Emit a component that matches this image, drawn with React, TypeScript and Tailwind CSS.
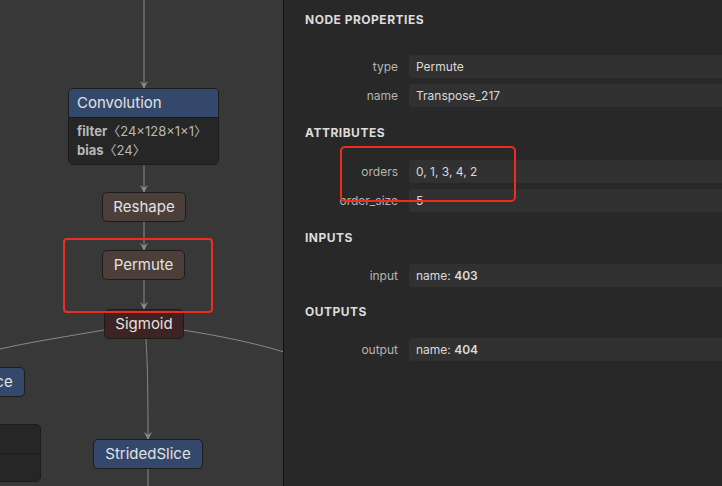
import React from "react"

type Row = { label: string; value: React.ReactNode }

const sections: { title: string; rows: Row[] }[] = [
  {
    title: "Node Properties",
    rows: [
      { label: "type", value: "Permute" },
      { label: "name", value: "Transpose_217" },
    ],
  },
  {
    title: "Attributes",
    rows: [
      { label: "orders", value: "0, 1, 3, 4, 2" },
      { label: "order_size", value: "5" },
    ],
  },
  {
    title: "Inputs",
    rows: [
      {
        label: "input",
        value: (
          <span>
            name: <b className="font-semibold">403</b>
          </span>
        ),
      },
    ],
  },
  {
    title: "Outputs",
    rows: [
      {
        label: "output",
        value: (
          <span>
            name: <b className="font-semibold">404</b>
          </span>
        ),
      },
    ],
  },
]

function Edges() {
  return (
    <svg className="absolute inset-0" width={283} height={486}>
      <defs>
        <marker
          id="arrow"
          viewBox="0 0 10 10"
          refX="9"
          refY="5"
          markerUnits="userSpaceOnUse"
          markerWidth="8"
          markerHeight="8"
          orient="auto"
        >
          <path d="M0 0 L10 5 L0 10 L4 5 z" fill="#8c8c8c" />
        </marker>
      </defs>
      <g stroke="#888" strokeWidth="1" fill="none">
        <path d="M144 0 L144 88" markerEnd="url(#arrow)" />
        <path d="M144 163 L144 192" markerEnd="url(#arrow)" />
        <path d="M144 221 L144 250" markerEnd="url(#arrow)" />
        <path d="M144 280 L144 309" markerEnd="url(#arrow)" />
        <path d="M146 339 C147 360 148 370 148 439" markerEnd="url(#arrow)" />
        <path d="M104 330 C70 336 30 342 0 349" />
        <path d="M183 330 C220 336 255 343 284 352" />
        <path d="M148 468 L148 486" />
      </g>
    </svg>
  )
}

const bracket = "font-['Noto_Sans_CJK_SC',sans-serif] text-[13px] leading-none"

function Graph() {
  return (
    <div className="relative w-[284px] h-full shrink-0 bg-[#383838] border-r border-[#121212] overflow-hidden">
      <Edges />

      {/* Convolution */}
      <div className="absolute left-[68px] top-[88px] w-[151px] rounded-[5px] border border-[#1c1c1c] overflow-hidden">
        <div className="h-[29px] bg-[#33486b] border-b border-[#1c1c1c] px-[8px] flex items-center text-[15px] text-[#e2e2e2]">
          Convolution
        </div>
        <div className="bg-[#262626] px-[8px] pt-[4px] pb-[4px] text-[13px] leading-[19px] text-[#b8b8b8]">
          <div className="h-[19px]">
            <span className="font-bold">filter</span>
            <span className={bracket}>〈</span>24×128×1×1<span className={bracket}>〉</span>
          </div>
          <div className="h-[19px]">
            <span className="font-bold">bias</span>
            <span className={bracket}>〈</span>24<span className={bracket}>〉</span>
          </div>
        </div>
      </div>

      {/* Reshape */}
      <div className="absolute left-[102px] top-[192px] w-[84px] h-[30px] rounded-[5px] border border-[#1c1c1c] bg-[#4c3e39] flex items-center justify-center text-[15px] text-[#e2e2e2]">
        Reshape
      </div>

      {/* Permute */}
      <div className="absolute left-[102px] top-[250px] w-[83px] h-[30px] rounded-[5px] border border-[#1c1c1c] bg-[#4c3e39] flex items-center justify-center text-[15px] text-[#e2e2e2]">
        Permute
      </div>

      {/* Sigmoid */}
      <div className="absolute left-[104px] top-[309px] w-[80px] h-[30px] rounded-[5px] border border-[#1c1c1c] bg-[#3d2321] flex items-center justify-center text-[15px] text-[#e2e2e2]">
        Sigmoid
      </div>

      {/* StridedSlice */}
      <div className="absolute left-[93px] top-[439px] w-[110px] h-[30px] rounded-[5px] border border-[#1c1c1c] bg-[#33486b] flex items-center justify-center text-[15px] text-[#e2e2e2]">
        StridedSlice
      </div>

      {/* partial nodes on the left edge */}
      <div className="absolute left-[-85px] top-[367px] w-[110px] h-[30px] rounded-[5px] border border-[#1c1c1c] bg-[#33486b] flex items-center justify-center text-[15px] text-[#e2e2e2]">
        StridedSlice
      </div>
      <div className="absolute left-[-60px] top-[424px] w-[101px] h-[58px] rounded-[5px] border border-[#1c1c1c] bg-[#262626] flex flex-col">
        <div className="flex-1 border-b border-[#1c1c1c]" />
        <div className="flex-1" />
      </div>

      {/* annotation */}
      <div className="absolute left-[63px] top-[238px] w-[150px] h-[75px] rounded-[4px] border-2 border-[#ee2c22]" />
    </div>
  )
}

function Panel() {
  return (
    <div className="w-[480px] shrink-0 h-full bg-[#282828] pl-[21px] pt-[12px]">
      {sections.map((s, i) => (
        <div key={s.title} className={i === 0 ? "" : i === 3 ? "mt-[17px]" : "mt-[18px]"}>
          <div className="h-[16px] leading-[16px] text-[12px] font-bold uppercase tracking-[0.5px] text-[#dcdcdc]">
            {s.title}
          </div>
          <div className={`flex flex-col gap-[6px] ${i === 0 ? "mt-[27px]" : i === 1 ? "mt-[19px]" : "mt-[18px]"}`}>
            {s.rows.map((r) => (
              <div key={r.label} className="flex items-center">
                <div className="w-[93px] text-right text-[12px] text-[#b4b4b4]">{r.label}</div>
                <div className="ml-[11px] flex-1 h-[23px] rounded-[3px] bg-[#313131] px-[7px] flex items-center text-[12px] text-[#dadada]">
                  {r.value}
                </div>
              </div>
            ))}
          </div>
        </div>
      ))}
    </div>
  )
}

export default function App() {
  return (
    <div className="relative flex w-[722px] h-[486px] overflow-hidden font-['Inter','Noto_Sans',sans-serif] antialiased">
      <Graph />
      <Panel />
      <div className="absolute left-[340px] top-[146px] w-[176px] h-[56px] rounded-[5px] border-2 border-[#ee2c22]" />
    </div>
  )
}
